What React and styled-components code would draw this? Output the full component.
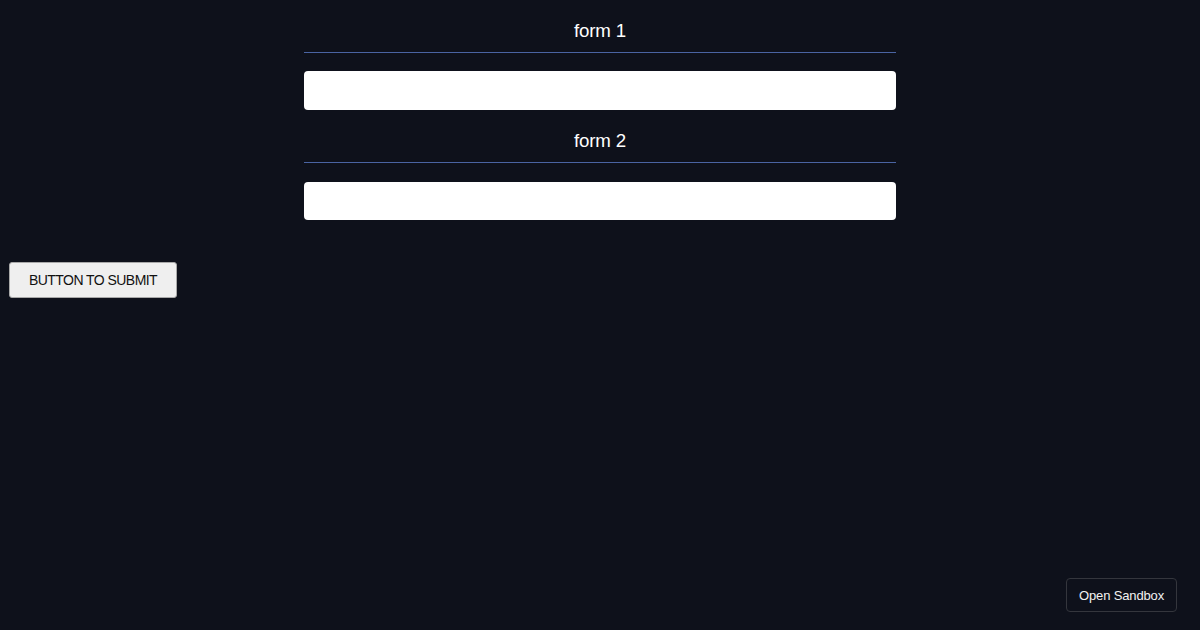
import React from "react";
import styled, { createGlobalStyle } from "styled-components";

const GlobalStyle = createGlobalStyle`
  html, body {
    background: #0e111b;
  }
  body {
    margin: 8px;
    font-family: "Liberation Sans", Arial, Helvetica, sans-serif;
    color: #ffffff;
  }
`;

const Page = styled.div`
  display: flex;
  flex-direction: column;
  align-items: flex-start;
`;

const Forms = styled.div`
  width: 592px;
  align-self: center;
  display: flex;
  flex-direction: column;
`;

const FormBlock = styled.section`
  display: flex;
  flex-direction: column;
  margin-top: ${(p) => (p.$first ? "0" : "8px")};
`;

const Title = styled.h3`
  margin: 0;
  padding: 12px 0 10.5px;
  font-size: 18.72px;
  font-weight: 400;
  line-height: 21.5px;
  letter-spacing: -0.2px;
  text-align: center;
  color: #ffffff;
  border-bottom: 1px solid #4a64a3;
`;

const Field = styled.input`
  box-sizing: border-box;
  margin-top: 18.4px;
  height: 38.8px;
  width: 100%;
  border: none;
  border-radius: 4px;
  background: #ffffff;
  padding: 0 12px;
  font-family: inherit;
  font-size: 14px;
  outline: none;
`;

const SubmitButton = styled.button`
  margin-top: 42px;
  margin-left: 1px;
  box-sizing: border-box;
  height: 36px;
  padding: 0 19px;
  background: #efefef;
  border: 1px solid #a9a9a9;
  border-radius: 3px;
  color: #111111;
  font-family: "Liberation Sans", Arial, sans-serif;
  font-size: 14px;
  letter-spacing: -0.55px;
  cursor: pointer;
`;

const SandboxLink = styled.a`
  position: fixed;
  right: 23px;
  bottom: 18px;
  box-sizing: border-box;
  height: 34px;
  padding: 0 12px 0 12px;
  display: flex;
  align-items: center;
  border: 1px solid #34363d;
  border-radius: 4px;
  background: #0e111b;
  color: #f2f2f2;
  font-family: "Liberation Sans", Arial, sans-serif;
  font-size: 13px;
  letter-spacing: -0.15px;
  text-decoration: none;
`;

export default function App() {
  return (
    <>
      <GlobalStyle />
      <Page>
        <Forms>
          <FormBlock $first>
            <Title>form 1</Title>
            <Field type="text" />
          </FormBlock>
          <FormBlock>
            <Title>form 2</Title>
            <Field type="text" />
          </FormBlock>
        </Forms>
        <SubmitButton type="button">BUTTON TO SUBMIT</SubmitButton>
      </Page>
      <SandboxLink href="#">Open Sandbox</SandboxLink>
    </>
  );
}
